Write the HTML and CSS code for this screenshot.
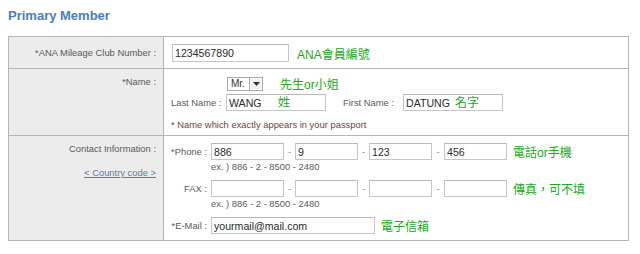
FILE: index.html
```html
<!DOCTYPE html>
<html>
<head>
<meta charset="utf-8">
<link rel="stylesheet" href="styles.css">
</head>
<body>
<h2 class="title">Primary Member</h2>
<div class="form">
  <div class="row row-club">
    <div class="label">*ANA Mileage Club Number :</div>
    <div class="field field-club">
      <input class="inp inp-club" value="1234567890">
      <span class="green g-club">ANA會員編號</span>
    </div>
  </div>
  <div class="row row-name">
    <div class="label">*Name :</div>
    <div class="field field-name">
      <div class="line line-title">
        <span class="select"><span class="sel-text">Mr.</span><span class="arrow"><svg width="7" height="4" viewBox="0 0 7 4"><path d="M0 0H7L3.5 4Z" fill="#333"/></svg></span></span>
        <span class="green g-title">先生or小姐</span>
      </div>
      <div class="line line-names">
        <span class="lbl lbl-last">Last Name :</span>
        <span class="wrap"><input class="inp inp-name" value="WANG"><span class="green tag">姓</span></span>
        <span class="lbl lbl-first">First Name :</span>
        <span class="wrap"><input class="inp inp-name" value="DATUNG"><span class="green tag">名字</span></span>
      </div>
      <div class="warn">* Name which exactly appears in your passport</div>
    </div>
  </div>
  <div class="row row-contact">
    <div class="label label-contact">
      <div>Contact Information :</div>
      <a class="cc" href="#">&lt; Country code &gt;</a>
    </div>
    <div class="field field-contact">
      <div class="crow">
        <span class="clbl">*Phone :</span>
        <input class="inp p1" value="886"><span class="dash">-</span><input class="inp p2" value="9"><span class="dash">-</span><input class="inp p2" value="123"><span class="dash dash-w">-</span><input class="inp p2" value="456">
        <span class="green g-side">電話or手機</span>
      </div>
      <div class="ex">ex. ) 886 - 2 - 8500 - 2480</div>
      <div class="crow crow-fax">
        <span class="clbl">FAX :</span>
        <input class="inp p1" value=""><span class="dash">-</span><input class="inp p2" value=""><span class="dash">-</span><input class="inp p2" value=""><span class="dash dash-w">-</span><input class="inp p2" value="">
        <span class="green g-side">傳真，可不填</span>
      </div>
      <div class="ex">ex. ) 886 - 2 - 8500 - 2480</div>
      <div class="crow crow-mail">
        <span class="clbl">*E-Mail :</span>
        <input class="inp p-mail" value="yourmail@mail.com">
        <span class="green g-side">電子信箱</span>
      </div>
    </div>
  </div>
</div>
</body>
</html>
```
FILE: styles.css
```css
body {
  margin: 8px;
  background: #fff;
  font-family: "Liberation Sans", Arial, sans-serif;
}
.title {
  margin: 0 0 13px 0;
  font-size: 13px;
  line-height: 15px;
  font-weight: bold;
  color: #4a7dbd;
}
.form {
  width: 621px;
  box-sizing: border-box;
  border: 1px solid #b5b5b5;
}
.row {
  display: grid;
  grid-template-columns: 155px 1fr;
  border-bottom: 1px solid #b5b5b5;
}
.row:last-child {
  border-bottom: none;
}
.label {
  background: #ececec;
  border-right: 1px solid #b5b5b5;
  box-sizing: border-box;
  text-align: right;
  padding-right: 7px;
  font-size: 9.4px;
  line-height: 12px;
  color: #5a5a5a;
}
.row-club .label {
  display: flex;
  align-items: center;
  justify-content: flex-end;
}
.row-name .label {
  padding-top: 7px;
}
.label-contact {
  padding-top: 7px;
}
.cc {
  display: inline-block;
  margin-top: 12px;
  color: #5b7ea5;
  text-decoration: underline;
}
.field {
  font-size: 9.4px;
  line-height: 12px;
  color: #5a5a5a;
}
.inp {
  box-sizing: border-box;
  height: 17px;
  margin: 0;
  padding: 0 2px;
  border: 1px solid #c6c6c6;
  border-top-color: #b8b8b8;
  background: #fff;
  font-family: "Liberation Sans", Arial, sans-serif;
  font-size: 10.6px;
  color: #2a2a2a;
  outline: none;
}
.green {
  font-family: "Liberation Sans", "Noto Sans CJK TC", sans-serif;
  font-size: 12px;
  line-height: 14px;
  color: #20aa20;
  white-space: nowrap;
}
.field-club {
  display: flex;
  align-items: center;
  padding: 7px 0 6px 8px;
}
.inp-club {
  width: 117px;
  height: 18px;
}
.g-club {
  margin-left: 8px;
  margin-top: 3px;
}
.field-name {
  padding: 8px 0 4px 7px;
}
.line {
  display: flex;
  align-items: center;
}
.line-title {
  height: 14px;
  padding-left: 56px;
}
.select {
  box-sizing: border-box;
  width: 36px;
  height: 14px;
  border: 1px solid #a9a9a9;
  background: #fff;
  display: flex;
  align-items: center;
  justify-content: space-between;
  padding-left: 3px;
  font-size: 10px;
  color: #333;
}
.arrow {
  box-sizing: border-box;
  width: 13px;
  height: 12px;
  border-left: 1px solid #a9a9a9;
  background: #f0f0f0;
  display: flex;
  align-items: center;
  justify-content: center;
  box-shadow: inset 0 0 0 1px #fff;
}
.g-title {
  margin-left: 17px;
  margin-top: 2px;
}
.line-names {
  margin-top: 3px;
}
.lbl {
  display: inline-block;
}
.lbl-last {
  width: 55px;
}
.lbl-first {
  width: 60px;
  margin-left: 17px;
}
.wrap {
  position: relative;
  display: inline-block;
  height: 17px;
}
.inp-name {
  width: 100px;
}
.tag {
  position: absolute;
  left: 52px;
  top: 2px;
}
.warn {
  margin-top: 8px;
  color: #7d3b3b;
}
.field-contact {
  padding: 7px 0 6px 3px;
}
.crow {
  display: flex;
  align-items: center;
}
.clbl {
  box-sizing: border-box;
  width: 44px;
  padding-right: 4px;
  text-align: right;
}
.p1 {
  width: 73px;
}
.p2 {
  width: 63px;
}
.dash {
  width: 11px;
  text-align: center;
  color: #888;
}
.dash-w {
  width: 12px;
}
.g-side {
  margin-left: 6px;
  margin-top: 2px;
}
.ex {
  margin-left: 44px;
  height: 13px;
  line-height: 13px;
}
.crow-fax,
.crow-mail {
  margin-top: 7px;
}
.p-mail {
  width: 164px;
}
```
